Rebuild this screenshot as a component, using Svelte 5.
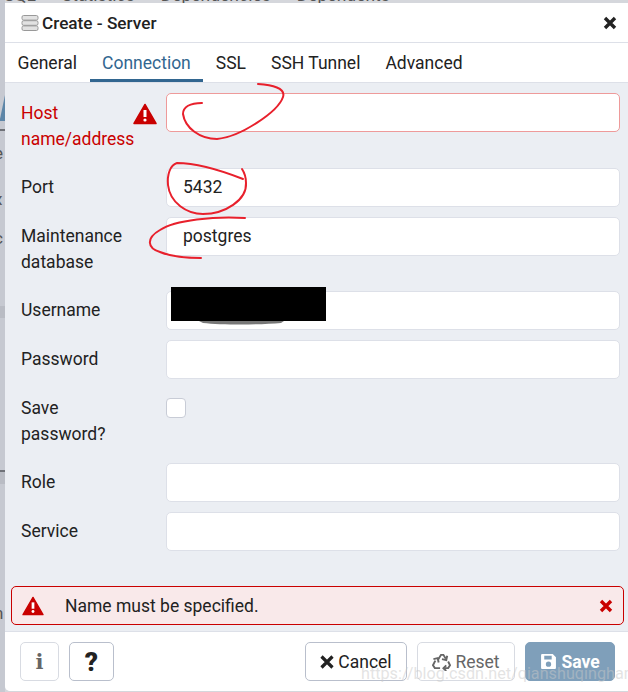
<script>
	const tabs = ['General', 'Connection', 'SSL', 'SSH Tunnel', 'Advanced'];
	const active = 'Connection';
	const fields = [
		{ label: 'Host name/address', value: '', invalid: true, tall: true },
		{ label: 'Port', value: '5432' },
		{ label: 'Maintenance database', value: 'postgres', tall: true },
		{ label: 'Username', value: '' },
		{ label: 'Password', value: '' },
		{ label: 'Save password?', check: true, tall: true },
		{ label: 'Role', value: '' },
		{ label: 'Service', value: '' }
	];
</script>

<div class="backdrop">
	<div class="crumbs"><span>SQL</span><span>Statistics</span><span>Dependencies</span><span>Dependents</span></div>
	<div class="strip">
		<svg class="peak" viewBox="0 0 5 26" width="5" height="26" aria-hidden="true">
			<path d="M0 24L5 0v26H0z" fill="#5d86a8" />
		</svg>
		<i class="rule" style="top: 129px"></i>
		<i class="rule" style="top: 470px"></i>
		<i class="band" style="top: 306px"></i>
		<i class="band" style="top: 472px"></i>
		<b class="letter" style="top: 143px">e</b>
		<b class="letter" style="top: 189px">x</b>
		<b class="letter" style="top: 228px">c</b>
		<b class="letter" style="top: 603px">n</b>
	</div>

	<div class="dialog">
		<header class="title">
			<svg class="server" viewBox="0 0 18 18" width="18" height="18" aria-hidden="true">
				<g fill="#e2e2e2" stroke="#999" stroke-width="1">
					<rect x="1" y="1.500" width="16" height="4.600" rx="1.600" />
					<rect x="1" y="6.700" width="16" height="4.600" rx="1.600" />
					<rect x="1" y="11.900" width="16" height="4.600" rx="1.600" />
				</g>
			</svg>
			<span>Create - Server</span>
			<svg class="close" viewBox="0 0 14 14" width="14" height="14" aria-hidden="true">
				<path d="M2 2l10 10M12 2L2 12" stroke="#222" stroke-width="3.400" />
			</svg>
		</header>

		<nav class="tabs">
			{#each tabs as tab}
				<span class="tab" class:active={tab === active}>{tab}</span>
			{/each}
		</nav>

		<div class="form">
			{#each fields as f}
				<div class="row" class:invalid={f.invalid}>
					<label class="label">{f.label}</label>
					{#if f.invalid}
						<svg class="warn" viewBox="0 0 24 22" width="24" height="22" aria-hidden="true">
							<path d="M12 1.500L23 20.500H1z" fill="#c90000" stroke="#c90000" stroke-width="1.500" stroke-linejoin="round" />
							<path d="M12 7v7" stroke="#fff" stroke-width="3" />
							<circle cx="12" cy="17" r="1.600" fill="#fff" />
						</svg>
					{/if}
					{#if f.check}
						<span class="check"></span>
					{:else}
						<input class="input" value={f.value} />
					{/if}
				</div>
			{/each}
		</div>

		<div class="alert">
			<svg viewBox="0 0 24 22" width="22" height="20" aria-hidden="true">
				<path d="M12 1.500L23 20.500H1z" fill="#c90000" stroke="#c90000" stroke-width="1.500" stroke-linejoin="round" />
				<path d="M12 7v7" stroke="#fff" stroke-width="3" />
				<circle cx="12" cy="17" r="1.600" fill="#fff" />
			</svg>
			<span class="msg">Name must be specified.</span>
			<svg viewBox="0 0 14 14" width="14" height="14" aria-hidden="true">
				<path d="M2 2l10 10M12 2L2 12" stroke="#c90000" stroke-width="3.400" />
			</svg>
		</div>

		<footer class="footer">
			<button class="btn icon muted"><span class="glyph info">i</span></button>
			<button class="btn icon"><span class="glyph help">?</span></button>
			<span class="spacer"></span>
			<button class="btn cancel">
				<svg viewBox="0 0 14 14" width="14" height="14" aria-hidden="true">
					<path d="M1.500 1.500l11 11M12.500 1.500l-11 11" stroke="#222" stroke-width="3.200" />
				</svg>
				Cancel
			</button>
			<button class="btn muted reset">
				<svg viewBox="0 0 20 20" width="19" height="19" fill="none" stroke="#666" stroke-width="2" aria-hidden="true">
					<path d="M6.500 8l3-5h2.500l2.500 4" />
					<path d="M16 4l-1 4.500-4.500-1" />
					<path d="M17 10l2 4-2 3h-4" />
					<path d="M15 14l-3 3 3 3" />
					<path d="M3.500 9L1 14l2 3h5.500" />
					<path d="M1.500 7.500l4.500-1 1 4.500" />
				</svg>
				Reset
			</button>
			<button class="btn save">
				<svg viewBox="0 0 16 16" width="17" height="17" aria-hidden="true">
					<path fill-rule="evenodd" d="M2 1h10l3 3v10a1 1 0 0 1-1 1H2a1 1 0 0 1-1-1V2a1 1 0 0 1 1-1zm2 1.500v3.500h7V2.500zM8 8a2.500 2.500 0 1 0 0 5 2.500 2.500 0 0 0 0-5z" fill="#fff" />
				</svg>
				Save
			</button>
		</footer>
	</div>

	<div class="redacted"></div>
	<svg class="marks" viewBox="0 0 628 692" aria-hidden="true">
		<path d="M199 321h85l-3 2c-20 2-60 2-78 0z" fill="#777" />
		<g fill="none" stroke="#e8202c" stroke-width="2" stroke-linecap="round">
			<path d="M202 103C190 103 183 107 183 114C185 128 200 139 217 139C240 137 278 112 283 97C286 88 272 85 258 84" />
			<path d="M243 179C220 170 195 163 177 163C170 165 167 175 168 185C170 203 187 214 203 214C225 214 247 200 246 183C246 177 244 172 242 169" />
			<path d="M245 218C215 216 175 220 160 230C146 238 147 248 160 252C172 257 188 258 201 258" />
		</g>
	</svg>
	<div class="watermark">https://blog.csdn.net/qianshuqinghan</div>
</div>

<style>
	:global(body) {
		margin: 0;
		background: #c9ccd2;
	}
	.backdrop {
		position: relative;
		width: 628px;
		height: 692px;
		overflow: hidden;
		background: #d5d7dc;
		font-family: Roboto, "Liberation Sans", sans-serif;
		color: #222;
	}
	.crumbs {
		position: absolute;
		top: -15px;
		left: 4px;
		display: flex;
		gap: 26px;
		font-size: 17.500px;
		color: #555;
	}
	.strip {
		position: absolute;
		top: 0;
		left: 0;
		bottom: 0;
		width: 5px;
		overflow: hidden;
		background: #c6c9d1;
	}
	.peak {
		position: absolute;
		top: 95px;
		left: 0;
	}
	.rule {
		position: absolute;
		left: 0;
		width: 5px;
		height: 2px;
		background: #6f7278;
	}
	.band {
		position: absolute;
		left: 0;
		width: 5px;
		height: 12px;
		background: #b9bcc4;
	}
	.letter {
		position: absolute;
		left: -6px;
		font-size: 17px;
		font-weight: 400;
		color: #555;
	}
	.dialog {
		position: absolute;
		top: 3px;
		left: 5px;
		right: 0;
		bottom: 1px;
		display: flex;
		flex-direction: column;
		background: #ebeef3;
		border-radius: 5px 0 0 5px;
	}
	.title {
		display: flex;
		align-items: center;
		height: 39px;
		padding: 0 11px 0 16px;
		gap: 3px;
		background: #fff;
		border-bottom: 1px solid #dde0e8;
		font-size: 17.200px;
		font-weight: 500;
	}
	.title span {
		flex: 1;
	}
	.tabs {
		display: flex;
		height: 39px;
		background: #fff;
		border-bottom: 1px solid #dde0e8;
	}
	.tab {
		padding: 0 12.500px;
		line-height: 40px;
		font-size: 17.500px;
		color: #222;
	}
	.tab.active {
		color: #326690;
		border-bottom: 3px solid #326690;
		height: 36px;
	}
	.form {
		flex: 1;
		display: flex;
		flex-direction: column;
		gap: 10px;
		padding: 10.200px 8px 0 16px;
	}
	.row {
		display: flex;
		align-items: flex-start;
		position: relative;
		font-size: 17.500px;
	}
	.label {
		box-sizing: border-box;
		width: 113px;
		min-height: 39px;
		padding: 6px 0 6.400px;
		line-height: 26px;
		margin-right: 32px;
		color: #222;
	}
	.invalid .label {
		padding: 7px 0 5.400px;
		color: #c90000;
	}
	.warn {
		position: absolute;
		left: 112px;
		top: 10px;
	}
	.input {
		box-sizing: border-box;
		flex: 1;
		min-width: 0;
		height: 39px;
		padding: 0 16px;
		border: 1px solid #dde0e8;
		border-radius: 5px;
		background: #fff;
		font: inherit;
		color: #222;
	}
	.invalid .input {
		border-color: #ee9a9a;
	}
	.check {
		display: block;
		box-sizing: border-box;
		width: 20px;
		height: 20px;
		margin-top: 9px;
		border: 1px solid #c8ccd6;
		border-radius: 4px;
		background: #fff;
	}
	.alert {
		display: flex;
		align-items: center;
		box-sizing: border-box;
		height: 39px;
		margin: 0 4px 6px 6px;
		padding: 0 10px;
		border: 1px solid #c90000;
		border-radius: 5px;
		background: #f9e9ea;
		font-size: 17.500px;
	}
	.msg {
		flex: 1;
		margin-left: 21px;
		color: #222;
	}
	.footer {
		display: flex;
		align-items: flex-start;
		gap: 10px;
		box-sizing: border-box;
		height: 60px;
		padding: 10px 13px 0 15px;
		background: #fff;
		border-top: 1px solid #dde0e8;
		border-radius: 0 0 0 5px;
	}
	.spacer {
		flex: 1;
	}
	.btn {
		box-sizing: border-box;
		display: flex;
		align-items: center;
		justify-content: center;
		gap: 4px;
		height: 39px;
		padding: 0;
		border: 1px solid #b9bfcc;
		border-radius: 5px;
		background: #fff;
		font-family: inherit;
		font-size: 17.500px;
		color: #222;
	}
	.btn.cancel {
		width: 102px;
	}
	.btn.reset {
		width: 98px;
	}
	.btn.icon {
		width: 45px;
	}
	.btn.icon.muted {
		width: 39px;
	}
	.btn.muted {
		border-color: #d8dbe2;
		color: #666;
	}
	.btn.save {
		width: 90px;
		border-color: #7f9fba;
		background: #7f9fba;
		color: #fff;
		font-weight: 700;
	}
	.glyph {
		font-size: 21px;
		font-weight: 900;
	}
	.info {
		font-family: "DejaVu Serif", serif;
		color: #666;
	}
	.help {
		font-size: 26px;
	}
	.redacted {
		position: absolute;
		left: 171px;
		top: 287px;
		width: 155px;
		height: 34px;
		background: #000;
	}
	.marks {
		position: absolute;
		inset: 0;
		pointer-events: none;
	}
	.watermark {
		position: absolute;
		left: 361px;
		top: 664px;
		font-size: 16.200px;
		color: rgba(200, 200, 200, 0.5);
		pointer-events: none;
	}
</style>
